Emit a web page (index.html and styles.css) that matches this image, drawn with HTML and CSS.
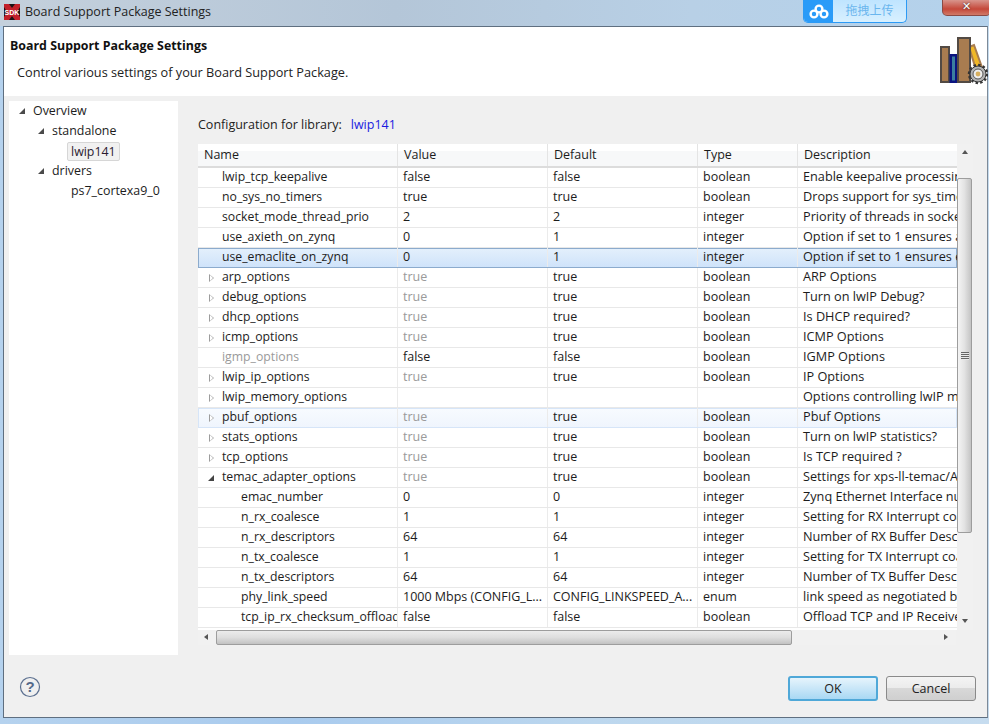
FILE: index.html
```html
<!DOCTYPE html>
<html lang="en">
<head>
<meta charset="utf-8">
<title>Board Support Package Settings</title>
<link rel="stylesheet" href="styles.css">
</head>
<body>
<div class="titlebar">
  <svg class="sdk" width="16" height="16" viewBox="0 0 16 16"><rect width="16" height="16" fill="#1a1214"/><path d="M0 0H5L8 4L11 0H16V3L13 8L16 13V16H11L8 12L5 16H0V13L3 8L0 3Z" fill="#c2202a"/><text x="8" y="11" text-anchor="middle" class="sdk-text">SDK</text></svg>
  <span class="title">Board Support Package Settings</span>
  <span class="spacer"></span>
  <div class="upload">
    <span class="cloud"><svg width="20" height="15" viewBox="0 0 20 15"><g fill="none" stroke="#fff" stroke-width="2.4"><circle cx="10" cy="5" r="3.4"/><circle cx="5" cy="10" r="3.4"/><circle cx="15" cy="10" r="3.4"/></g></svg></span>
    <span class="upload-text">拖拽上传</span>
  </div>
  <div class="close">✕</div>
</div>
<div class="window">
  <header class="banner">
    <div>
      <h1>Board Support Package Settings</h1>
      <p>Control various settings of your Board Support Package.</p>
    </div>
    <svg class="books" width="50" height="49" viewBox="0 0 50 49">
      <path d="M31 11 L36 9 L46 37 L40 40Z" fill="#f0b828" stroke="#a87c50" stroke-width="2"/>
      <rect x="3" y="11" width="8" height="35" fill="#a87c50" stroke="#524a44" stroke-width="2"/>
      <rect x="12.75" y="19.25" width="5.5" height="26.5" fill="#3a7fa0" stroke="#0b1480" stroke-width="2.5"/>
      <rect x="20" y="2" width="12" height="44" fill="#a87c50" stroke="#524a44" stroke-width="2"/>
      <circle cx="40" cy="38" r="9" fill="none" stroke="#333" stroke-width="2.4" stroke-dasharray="2.4 2.3"/>
      <circle cx="40" cy="38" r="8" fill="#b4b4b4" stroke="#333" stroke-width="1"/>
      <circle cx="40" cy="38" r="5" fill="#eee" stroke="#555"/>
      <circle cx="40" cy="38" r="2.4" fill="#d8b060"/>
    </svg>
  </header>
  <main class="body">
    <nav class="tree">
      <div class="node l0"><i class="tri open"></i>Overview</div>
      <div class="node l1"><i class="tri open"></i>standalone</div>
      <div class="node l2"><span class="sel">lwip141</span></div>
      <div class="node l1"><i class="tri open"></i>drivers</div>
      <div class="node l2"><span class="plain">ps7_cortexa9_0</span></div>
    </nav>
    <section class="config">
      <div class="config-label">Configuration for library:<span class="lib">lwip141</span></div>
      <div class="table-wrap">
        <div class="table-col">
          <div class="row head"><div>Name</div><div>Value</div><div>Default</div><div>Type</div><div>Description</div></div>
          <div class="row"><div class="n1">lwip_tcp_keepalive</div><div>false</div><div>false</div><div>boolean</div><div>Enable keepalive processing with</div></div>
          <div class="row"><div class="n1">no_sys_no_timers</div><div>true</div><div>true</div><div>boolean</div><div>Drops support for sys_timeout</div></div>
          <div class="row"><div class="n1">socket_mode_thread_prio</div><div>2</div><div>2</div><div>integer</div><div>Priority of threads in socket mode</div></div>
          <div class="row"><div class="n1">use_axieth_on_zynq</div><div>0</div><div>1</div><div>integer</div><div>Option if set to 1 ensures axieth</div></div>
          <div class="row selected"><div class="n1">use_emaclite_on_zynq</div><div>0</div><div>1</div><div>integer</div><div>Option if set to 1 ensures emaclite</div></div>
          <div class="row"><div class="n1"><i class="arrow"></i>arp_options</div><div class="dim">true</div><div>true</div><div>boolean</div><div>ARP Options</div></div>
          <div class="row"><div class="n1"><i class="arrow"></i>debug_options</div><div class="dim">true</div><div>true</div><div>boolean</div><div>Turn on lwIP Debug?</div></div>
          <div class="row"><div class="n1"><i class="arrow"></i>dhcp_options</div><div class="dim">true</div><div>true</div><div>boolean</div><div>Is DHCP required?</div></div>
          <div class="row"><div class="n1"><i class="arrow"></i>icmp_options</div><div class="dim">true</div><div>true</div><div>boolean</div><div>ICMP Options</div></div>
          <div class="row"><div class="n1 dim">igmp_options</div><div>false</div><div>false</div><div>boolean</div><div>IGMP Options</div></div>
          <div class="row"><div class="n1"><i class="arrow"></i>lwip_ip_options</div><div class="dim">true</div><div>true</div><div>boolean</div><div>IP Options</div></div>
          <div class="row"><div class="n1"><i class="arrow"></i>lwip_memory_options</div><div></div><div></div><div></div><div>Options controlling lwIP memory</div></div>
          <div class="row hover"><div class="n1"><i class="arrow"></i>pbuf_options</div><div class="dim">true</div><div>true</div><div>boolean</div><div>Pbuf Options</div></div>
          <div class="row"><div class="n1"><i class="arrow"></i>stats_options</div><div class="dim">true</div><div>true</div><div>boolean</div><div>Turn on lwIP statistics?</div></div>
          <div class="row"><div class="n1"><i class="arrow"></i>tcp_options</div><div class="dim">true</div><div>true</div><div>boolean</div><div>Is TCP required ?</div></div>
          <div class="row"><div class="n1"><i class="arrow down"></i>temac_adapter_options</div><div class="dim">true</div><div>true</div><div>boolean</div><div>Settings for xps-ll-temac/Axi</div></div>
          <div class="row"><div class="n2">emac_number</div><div>0</div><div>0</div><div>integer</div><div>Zynq Ethernet Interface number</div></div>
          <div class="row"><div class="n2">n_rx_coalesce</div><div>1</div><div>1</div><div>integer</div><div>Setting for RX Interrupt coalescing</div></div>
          <div class="row"><div class="n2">n_rx_descriptors</div><div>64</div><div>64</div><div>integer</div><div>Number of RX Buffer Descriptors</div></div>
          <div class="row"><div class="n2">n_tx_coalesce</div><div>1</div><div>1</div><div>integer</div><div>Setting for TX Interrupt coalescing</div></div>
          <div class="row"><div class="n2">n_tx_descriptors</div><div>64</div><div>64</div><div>integer</div><div>Number of TX Buffer Descriptors</div></div>
          <div class="row"><div class="n2">phy_link_speed</div><div>1000 Mbps (CONFIG_L...</div><div>CONFIG_LINKSPEED_A...</div><div>enum</div><div>link speed as negotiated by the PHY</div></div>
          <div class="row"><div class="n2">tcp_ip_rx_checksum_offload</div><div>false</div><div>false</div><div>boolean</div><div>Offload TCP and IP Receive checksum</div></div>
        </div>
        <div class="vbar">
          <span class="up"></span>
          <div class="vthumb"><span class="grip"></span></div>
          <span class="dn"></span>
        </div>
        <div class="hbar">
          <span class="lf"></span>
          <div class="hthumb"></div>
          <span class="rt"></span>
        </div>
      </div>
    </section>
  </main>
  <footer class="foot">
    <svg class="help" width="22" height="22" viewBox="0 0 22 22"><circle cx="11" cy="11" r="9.5" fill="none" stroke="#5c7090" stroke-width="1.2"/><text x="11" y="16" text-anchor="middle" class="qm">?</text></svg>
    <span class="spacer"></span>
    <button class="btn ok">OK</button>
    <button class="btn">Cancel</button>
  </footer>
</div>
</body>
</html>
```
FILE: styles.css
```css
* { box-sizing: border-box; }
html, body { margin: 0; height: 100%; }
body {
  width: 989px; height: 724px; overflow: hidden;
  display: flex; flex-direction: column;
  background: linear-gradient(90deg, #b5d2ee, #a9cbee 30%, #bcd7ee 60%, #c6dcef);
  font: 12.5px/20px "Open Sans", "Noto Sans CJK SC", sans-serif;
  color: #1c1c1c;
}
.titlebar { height: 26px; display: flex; align-items: flex-start; padding: 4px 0 0 4px; flex: none; background: linear-gradient(90deg, #c4d0dc, #b4c6d8 40%, #b8d0e6 70%, #b4d2ec); }
.sdk { flex: none; display: block; }
.sdk-text { font: bold 7px "Liberation Sans", sans-serif; fill: #fff; }
.title { margin-left: 5px; font-size: 12.5px; line-height: 16px; color: #222; }
.spacer { flex: 1; }
.upload {
  width: 104px; height: 23px; margin: -4px 35px 0 0; display: flex;
  background: linear-gradient(#bfe4ff, #d8f0ff); border: 1px solid #2c9af5; border-top: 0; border-radius: 0 0 5px 5px; overflow: hidden;
}
.cloud { width: 29px; background: #2a9bf8; display: flex; align-items: center; justify-content: center; }
.upload-text { flex: 1; text-align: center; color: #6ab6ee; font-size: 12px; line-height: 22px; }
.close {
  width: 49px; height: 16px; margin: -4px -2px 0 0; flex: none; border: 1px solid #8a4a44; border-top: 0; border-radius: 0 0 5px 5px;
  background: linear-gradient(#d8958c, #c5483a 60%, #d07a68); color: #fff; font: bold 11px/14px "DejaVu Sans", sans-serif; text-align: center;
  text-shadow: 0 0 2px #222;
}
.window {
  flex: none; width: 985px; height: 692px; margin-left: 3px;
  display: flex; flex-direction: column; background: #f0f0f0;
  border: 1px solid #5f6f80; border-right-color: #7d8a98;
}
.banner { height: 69px; background: #fff; flex: none; display: flex; justify-content: space-between; padding: 9px 0 0 6px; }
h1 { margin: 0; font-size: 12.4px; font-weight: 700; line-height: 20px; color: #111; }
.banner p { margin: 6px 0 0 7px; line-height: 20px; color: #222; font-size: 12.72px; }
.books { margin: 0 -1px 0 0; flex: none; }
.body { flex: 1; display: flex; min-height: 0; padding: 5px 0 0 5px; }
.tree { width: 169px; height: 554px; background: #fff; flex: none; font-size: 12.4px; }
.node { height: 20px; display: flex; align-items: center; white-space: nowrap; }
.l0 { padding-left: 10px; }
.l1 { padding-left: 29px; }
.l2 { padding-left: 62px; }
.tri { width: 0; height: 0; margin-right: 8px; }
.tri.open { border-style: solid; border-width: 0 0 6px 6px; border-color: transparent transparent #4a4a4a transparent; }
.sel { background: #f1f1f1; border: 1px solid #d6d6d6; border-radius: 2px; padding: 0 3px; height: 19px; line-height: 17px; margin-left: -4px; color: #2a1a30; }
.plain { display: block; }
.config { flex: 1; padding-left: 20px; min-width: 0; }
.config-label { height: 43px; padding-top: 14px; line-height: 20px; color: #222; }
.lib { color: #1a1ae0; margin-left: 9px; }
.table-wrap { display: grid; grid-template-columns: 759px 16px; grid-template-rows: 486px 15px; width: 775px; }
.table-col { background: #fff; overflow: hidden; }
.row { display: grid; grid-template-columns: 200px 150px 150px 100px 159px; height: 20px; border-bottom: 1px solid #e8e8e8; white-space: nowrap; }
.row > div { padding: 0 0 0 5px; overflow: hidden; border-right: 1px solid #ebebeb; line-height: 17px; position: relative; }
.row > div:last-child { border-right: 0; font-size: 12.7px; }
.row.head { height: 24px; border-bottom: 2px solid #dcdcdc; background: linear-gradient(#fff 30%, #f7f8f9 30%, #f7f8f9); }
.row.head > div, .row.head > div:last-child { line-height: 22px; padding-left: 6px; border-right-color: #e4e4e4; font-size: 12.5px; }
.row .n1 { padding-left: 24px; font-size: 12.25px; }
.row .n2 { padding-left: 43px; font-size: 12.25px; }
.row.selected { background: linear-gradient(#e4f0fc, #cfe3fa); outline: 1px solid #8cabcd; outline-offset: -1px; }
.row.hover { background: linear-gradient(#f8fbff, #eff5fd); outline: 1px solid #d6e5f8; outline-offset: -1px; }
.dim, .row > .dim { color: #9a9a9a; }
.arrow { position: absolute; left: 11px; top: 6px; width: 0; height: 0; border-style: solid; border-width: 4.5px 0 4.5px 5.5px; border-color: transparent transparent transparent #9c9c9c; }
.arrow::after { content: ""; position: absolute; left: -4.5px; top: -3px; border-style: solid; border-width: 3px 0 3px 3.4px; border-color: transparent transparent transparent #fff; }
.arrow.down { left: 10px; top: 7px; border-width: 0 0 6px 6px; border-color: transparent transparent #444 transparent; }
.arrow.down::after { display: none; }
.vbar { background: #f1f1f1; display: flex; flex-direction: column; align-items: flex-start; }
.up, .dn { height: 34px; flex: none; width: 100%; position: relative; }
.dn { height: 17px; margin-top: auto; }
.up::after { content: ""; position: absolute; left: 5px; top: 6px; border-style: solid; border-width: 0 3.5px 4px; border-color: transparent transparent #555; }
.dn::after { content: ""; position: absolute; left: 5px; top: 6px; border-style: solid; border-width: 4px 3.5px 0; border-color: #555 transparent transparent; }
.vthumb { width: 15px; height: 355px; background: linear-gradient(90deg, #f4f4f4, #e2e2e2 50%, #c4c4c4); border: 1px solid #9d9d9d; border-radius: 2px; display: flex; align-items: center; justify-content: center; }
.grip { width: 8px; height: 8px; background: repeating-linear-gradient(#666 0 1px, #e8e8e8 1px 2px); }
.hbar { background: #f1f1f1; display: flex; align-items: center; grid-column: 1; margin-right: 1px; }
.lf, .rt { width: 18px; height: 15px; flex: none; position: relative; }
.rt { margin-left: auto; }
.lf::after { content: ""; position: absolute; left: 6px; top: 4px; border-style: solid; border-width: 3.5px 4px 3.5px 0; border-color: transparent #555 transparent transparent; }
.rt::after { content: ""; position: absolute; left: 6px; top: 4px; border-style: solid; border-width: 3.5px 0 3.5px 4px; border-color: transparent transparent transparent #555; }
.hthumb { width: 576px; height: 15px; background: linear-gradient(#ececec, #dedede 50%, #c2c2c2); border: 1px solid #9d9d9d; border-radius: 2px; }
.foot { flex: none; height: 64px; display: flex; align-items: flex-start; padding: 23px 11px 0 15px; gap: 8px; }
.help { display: block; }
.qm { font: bold 15px "Liberation Sans", sans-serif; fill: #55698a; }
.btn { width: 90px; height: 25px; border: 1px solid #8a8a8a; border-radius: 3px; font: 12.5px "Open Sans", sans-serif; color: #222; padding: 0; background: linear-gradient(#f4f4f4, #ebebeb 48%, #d8d8d8 50%, #cfcfcf); }
.btn.ok { border: 2px solid #4fa8d8; background: linear-gradient(#e6f4fc, #c8e6f8 50%, #a8d8f4); }
```
